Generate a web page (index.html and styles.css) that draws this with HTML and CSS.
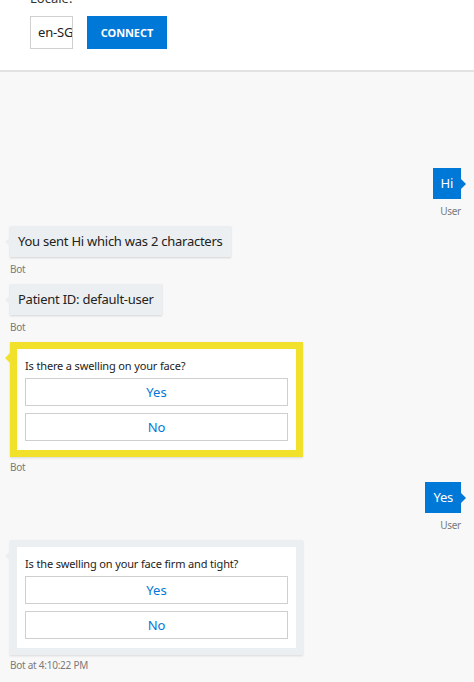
FILE: index.html
```html
<!DOCTYPE html>
<html>
<head>
<meta charset="utf-8">
<link rel="stylesheet" href="styles.css">
</head>
<body>
<header class="header">
  <div class="locale-label">Locale:</div>
  <div class="controls">
    <div class="locale-input">en-SG</div>
    <button class="connect">CONNECT</button>
  </div>
</header>
<main class="chat">
  <div class="msg user">
    <div class="bubble user-bubble">Hi</div>
    <div class="meta">User</div>
  </div>
  <div class="msg bot">
    <div class="bubble bot-bubble">You sent Hi which was 2 characters</div>
    <div class="meta">Bot</div>
  </div>
  <div class="msg bot">
    <div class="bubble bot-bubble">Patient ID: default-user</div>
    <div class="meta">Bot</div>
  </div>
  <div class="msg bot">
    <div class="card card-focus">
      <div class="card-inner">
        <div class="card-text">Is there a swelling on your face?</div>
        <div class="card-btn">Yes</div>
        <div class="card-btn">No</div>
      </div>
    </div>
    <div class="meta card-meta">Bot</div>
  </div>
  <div class="msg user">
    <div class="bubble user-bubble">Yes</div>
    <div class="meta">User</div>
  </div>
  <div class="msg bot">
    <div class="card card-plain">
      <div class="card-inner">
        <div class="card-text">Is the swelling on your face firm and tight?</div>
        <div class="card-btn">Yes</div>
        <div class="card-btn">No</div>
      </div>
    </div>
    <div class="meta card-meta">Bot at 4:10:22 PM</div>
  </div>
</main>
</body>
</html>
```
FILE: styles.css
```css
* { box-sizing: border-box; }
html, body { margin: 0; padding: 0; }
body {
  font-family: "Segoe UI", "Noto Sans", "Open Sans", sans-serif;
  background: #f8f8f8;
  color: #222;
  width: 474px;
  height: 682px;
  overflow: hidden;
}
.header {
  display: flow-root;
  background: #fff;
  height: 72px;
  padding-left: 30px;
  border-bottom: 2px solid #e2e2e2;
}
.locale-label {
  font-size: 13px;
  line-height: 16px;
  margin-top: -10px;
  color: #333;
}
.controls {
  display: flex;
  align-items: center;
  gap: 14px;
  margin-top: 10px;
}
.locale-input {
  width: 43px;
  height: 33px;
  border: 1px solid #d0d0d0;
  background: #fff;
  font-size: 13px;
  letter-spacing: -0.2px;
  line-height: 31px;
  padding-left: 7px;
  overflow: hidden;
  white-space: nowrap;
  color: #222;
}
.connect {
  width: 80px;
  height: 33px;
  background: #0078d7;
  color: #fff;
  border: none;
  font-family: inherit;
  font-weight: bold;
  font-size: 11px;
  letter-spacing: -0.1px;
  padding: 0;
}
.chat {
  padding: 96px 13px 0 10px;
  display: flex;
  flex-direction: column;
  gap: 8px;
}
.msg { display: flex; flex-direction: column; }
.msg.user { align-items: flex-end; }
.msg.bot { align-items: flex-start; }
.bubble {
  position: relative;
  font-size: 13px;
  letter-spacing: -0.25px;
  line-height: 19px;
  padding: 6px 8px;
}
.user-bubble {
  background: #0078d7;
  color: #fff;
  height: 31px;
}
.user-bubble::after {
  content: "";
  position: absolute;
  right: -5px;
  top: 11px;
  border-top: 5px solid transparent;
  border-bottom: 5px solid transparent;
  border-left: 5px solid #0078d7;
}
.bot-bubble {
  background: #eceff1;
  color: #222;
  box-shadow: 0 1px 2px rgba(0,0,0,0.15);
}
.bot-bubble::before {
  content: "";
  position: absolute;
  left: -5px;
  top: 11px;
  border-top: 5px solid transparent;
  border-bottom: 5px solid transparent;
  border-right: 5px solid #eceff1;
}
.meta {
  font-size: 10px;
  letter-spacing: -0.25px;
  line-height: 14px;
  margin-top: 5px;
  color: #7a7a7a;
}
.card-meta { margin-top: 3px; }
.card {
  position: relative;
  width: 293px;
  border: 7px solid;
  box-shadow: 0 1px 2px rgba(0,0,0,0.12);
}
.card::before {
  content: "";
  position: absolute;
  left: -12px;
  top: 4px;
  border-top: 5px solid transparent;
  border-bottom: 5px solid transparent;
  border-right: 5px solid;
  border-right-color: inherit;
}
.card-focus { border-color: #f2e12b; }
.card-plain { border-color: #eceff1; }
.card-inner {
  background: #fff;
  padding: 8px 8px 9px;
  display: flex;
  flex-direction: column;
  gap: 7px;
}
.card-text {
  font-size: 11px;
  letter-spacing: -0.15px;
  line-height: 18px;
  margin-bottom: -4px;
  color: #222;
}
.card-btn {
  height: 28px;
  border: 1px solid #cfcfcf;
  text-align: center;
  color: #0078d7;
  font-size: 13px;
  line-height: 26px;
}
```
